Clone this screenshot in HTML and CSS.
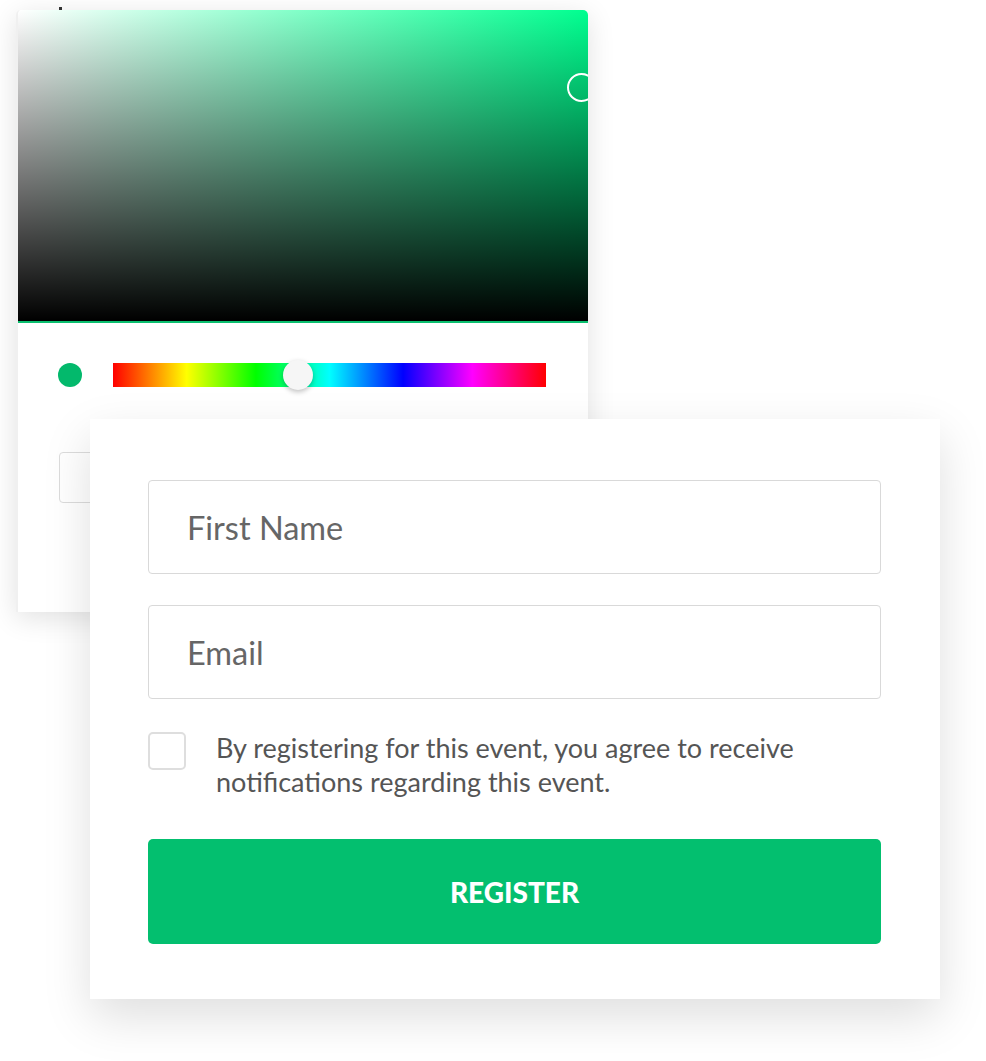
FILE: index.html
```html
<!DOCTYPE html>
<html lang="en">
<head>
  <meta charset="UTF-8" />
  <meta name="viewport" content="width=device-width, initial-scale=1.0"/>
  <title>Event Registration</title>
  <link rel="stylesheet" href="styles.css">
</head>
<body>

  <div class="stage">
    <span class="stray-mark"></span>

    <!-- Colour picker -->
    <div class="picker">
      <div class="sv-area">
        <span class="sv-handle"></span>
      </div>
      <div class="hue-row">
        <span class="swatch"></span>
        <div class="hue-bar">
          <span class="hue-thumb"></span>
        </div>
      </div>
      <div class="picker-input"></div>
    </div>

    <!-- Registration form -->
    <form class="register-card" onsubmit="return false">
      <input class="field" type="text" placeholder="First Name">
      <input class="field" type="email" placeholder="Email">
      <label class="consent">
        <span class="check-box"></span>
        <span class="consent-text">By registering for this event, you agree to receive notifications regarding this event.</span>
      </label>
      <button class="register-btn" type="submit">REGISTER</button>
    </form>
  </div>

</body>
</html>
```

FILE: styles.css
```css
body {
  margin: 0;
  background-color: #fff;
  font-family: Lato, "Open Sans", Arial, sans-serif;
}

.stage {
  position: relative;
  width: 986px;
  height: 1061px;
  overflow: hidden;
  padding-top: 10px;
  box-sizing: border-box;
}

.stray-mark {
  position: absolute;
  left: 59px;
  top: 7px;
  width: 3px;
  height: 3px;
  background-color: #333;
}

/* Colour picker */
.picker {
  margin-left: 16px;
  width: 572px;
  height: 602px;
  box-sizing: border-box;
  background-color: #fff;
  border-left: 2px solid #f0f0f0;
  border-radius: 5px 5px 0 0;
  box-shadow: 0 6px 28px rgba(0,0,0,0.12);
  overflow: hidden;
}

.sv-area {
  position: relative;
  height: 311px;
  background:
    linear-gradient(to top, #000, rgba(0,0,0,0)),
    linear-gradient(to right, #fff, #00ff90);
  border-bottom: 2px solid #0bbf6f;
  overflow: hidden;
}

.sv-handle {
  position: absolute;
  left: 549px;
  top: 63px;
  width: 25px;
  height: 25px;
  border: 2px solid #fff;
  border-radius: 50%;
}

.hue-row {
  display: flex;
  align-items: center;
  gap: 31px;
  padding: 0 42px 0 40px;
  margin-top: 40px;
  height: 24px;
}

.swatch {
  width: 24px;
  height: 24px;
  border-radius: 50%;
  background-color: #03b96c;
  flex-shrink: 0;
}

.hue-bar {
  position: relative;
  flex: 1;
  height: 24px;
  background: linear-gradient(to right, #ff0000, #ffff00 17%, #00ff00 33%, #00ffff 50%, #0000ff 67%, #ff00ff 83%, #ff0000);
}

.hue-thumb {
  position: absolute;
  left: 170px;
  top: -3px;
  width: 30px;
  height: 30px;
  border-radius: 50%;
  background-color: #f6f6f6;
  box-shadow: 0 2px 5px rgba(0,0,0,0.25);
}

.picker-input {
  margin: 65px 0 0 41px;
  width: 486px;
  height: 49px;
  border: 1px solid #dcdcdc;
  border-radius: 4px;
}

/* Registration form */
.register-card {
  position: absolute;
  left: 90px;
  top: 419px;
  width: 850px;
  height: 580px;
  box-sizing: border-box;
  margin: 0;
  padding: 61px 59px 0 58px;
  background-color: #fff;
  box-shadow: 0 18px 45px rgba(0,0,0,0.13);
  display: flex;
  flex-direction: column;
}

.field {
  height: 94px;
  box-sizing: border-box;
  margin: 0 0 31px;
  padding: 0 38px;
  border: 1px solid #d9d9d9;
  border-radius: 4px;
  font-family: Lato, "Open Sans", Arial, sans-serif;
  font-size: 32.5px;
  color: #555;
  outline: none;
}

.field::placeholder {
  color: #666;
}

.consent {
  display: flex;
  align-items: flex-start;
  gap: 30px;
  margin-top: 1px;
}

.check-box {
  flex-shrink: 0;
  width: 38px;
  height: 38px;
  box-sizing: border-box;
  border: 2px solid #dedede;
  border-radius: 5px;
  margin-top: 1px;
}

.consent-text {
  font-size: 27px;
  line-height: 34px;
  color: #555;
}

.register-btn {
  margin-top: 40px;
  height: 105px;
  border: none;
  border-radius: 5px;
  background-color: #03bf6f;
  color: #fff;
  font-family: Lato, "Open Sans", Arial, sans-serif;
  font-size: 28px;
  font-weight: 900;
  cursor: pointer;
}
```
